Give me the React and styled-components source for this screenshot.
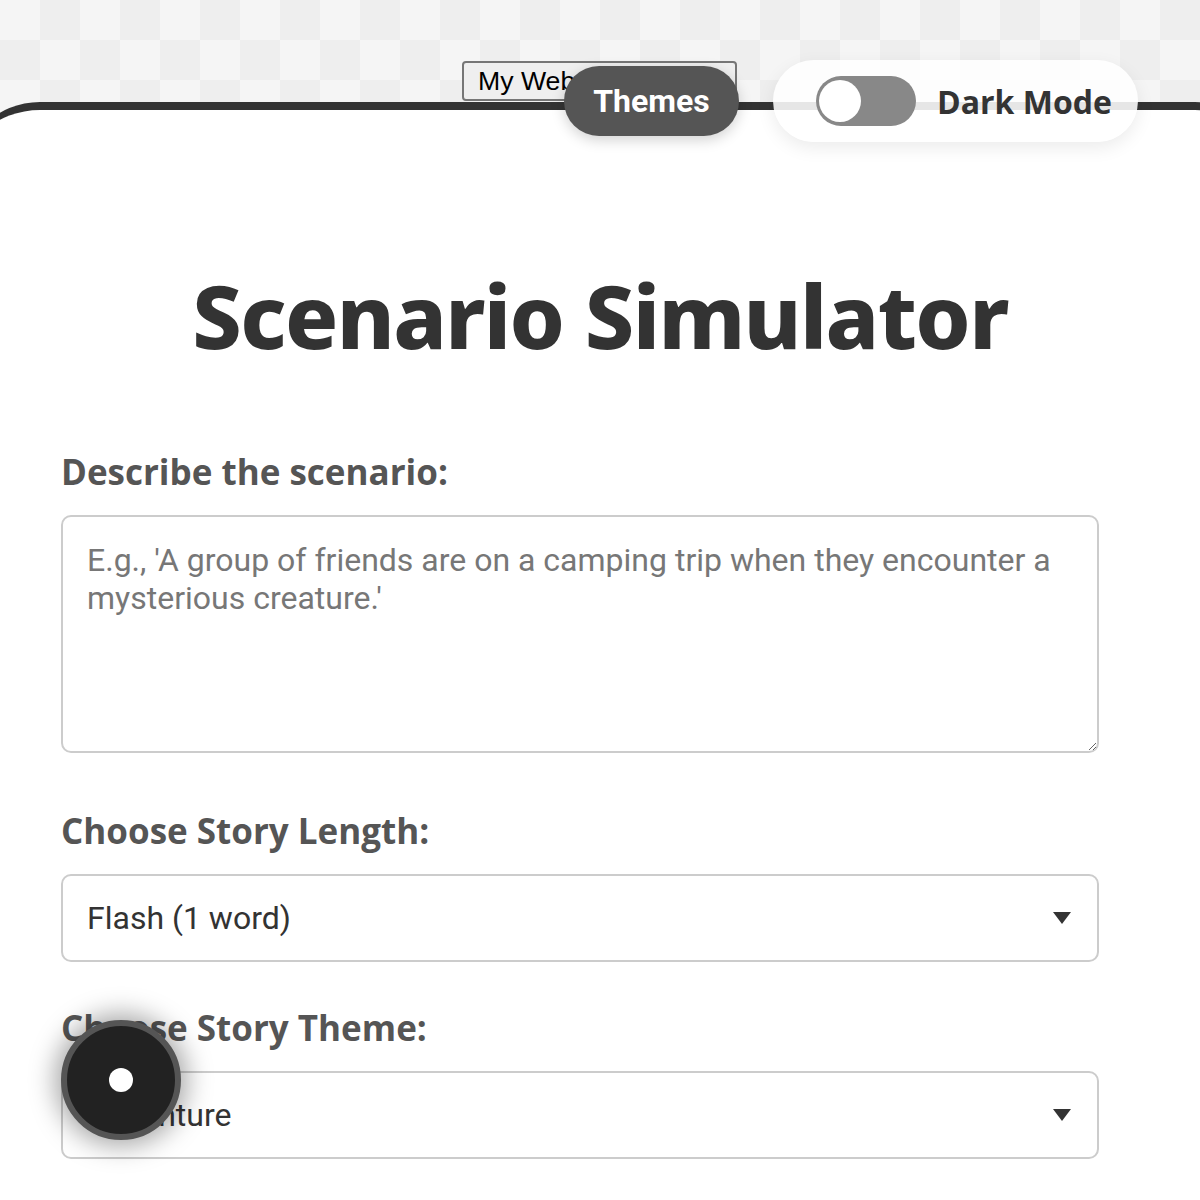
import { useState } from "react";
import styled, { createGlobalStyle } from "styled-components";

const GlobalStyle = createGlobalStyle`
  html, body {
    margin: 0;
    padding: 0;
  }
  body {
    overflow: hidden;
    font-family: "Open Sans", "Noto Sans", sans-serif;
    background-color: #f3f3f3;
    background-image: repeating-conic-gradient(#eeeeee 0 25%, #f5f5f5 0 50%);
    background-size: 80px 80px;
  }
`;

const Page = styled.div`
  height: 1200px;
  overflow: hidden;
`;

// 상단 헤더 (버튼 + 테마 + 다크모드)
const Header = styled.header`
  position: relative;
  z-index: 2;
  display: flex;
  align-items: center;
  justify-content: flex-end;
  height: 82px;
  margin-top: 60px;
  padding-right: 62px;
`;

const SiteButton = styled.button`
  align-self: flex-start;
  margin-top: 1px;
  width: 275px;
  height: 40px;
  padding: 0 14px;
  text-align: left;
  font-family: "Liberation Sans", Arial, sans-serif;
  font-size: 26.67px;
  color: #000;
  background: #efefef;
  border: 2px solid #767676;
  border-radius: 4px;
  white-space: nowrap;
  overflow: hidden;
`;

const ThemesPill = styled.button`
  margin-left: -173px;
  width: 175px;
  height: 70px;
  border: none;
  border-radius: 35px;
  background: #555;
  color: #fff;
  font-family: Roboto, sans-serif;
  font-weight: 700;
  font-size: 32px;
  box-shadow: 0 4px 14px rgba(0, 0, 0, 0.18);
  cursor: pointer;
`;

const ModePill = styled.div`
  display: flex;
  align-items: center;
  gap: 21px;
  width: 365px;
  margin-left: 34px;
  height: 82px;
  padding: 0 0 0 43px;
  box-sizing: border-box;
  border-radius: 41px;
  background: rgba(255, 255, 255, 0.88);
  box-shadow: 0 6px 18px rgba(0, 0, 0, 0.08);
`;

const Track = styled.button`
  position: relative;
  flex-shrink: 0;
  width: 100px;
  height: 50px;
  padding: 0;
  border: none;
  border-radius: 25px;
  background: ${(p) => (p.$on ? "#333" : "#888")};
  cursor: pointer;
`;

const Knob = styled.span`
  position: absolute;
  top: 4px;
  left: ${(p) => (p.$on ? "54px" : "3px")};
  width: 42px;
  height: 42px;
  border-radius: 50%;
  background: #fff;
  transition: left 0.2s;
`;

const ModeText = styled.span`
  font-family: "Open Sans", sans-serif;
  font-weight: 700;
  font-size: 32px;
  color: #333;
  white-space: nowrap;
`;

const Card = styled.main`
  position: relative;
  z-index: 1;
  margin: -40px -75px 0 -40px;
  padding: 0 135px 40px 100px;
  background: #fff;
  border-top: 8px solid #333;
  border-radius: 80px 80px 0 0;
`;

const Title = styled.h1`
  margin: 153px 0 80px;
  text-align: center;
  font-family: "Noto Sans", sans-serif;
  font-weight: 800;
  font-size: 88px;
  line-height: 105px;
  letter-spacing: -1.6px;
  color: #333;
`;

const Form = styled.form`
  width: 1038px;
  margin-left: 1px;
`;

const Group = styled.div`
  margin-bottom: 42px;
`;

const Label = styled.label`
  display: block;
  margin-bottom: 20px;
  font-family: "Open Sans", sans-serif;
  font-weight: 700;
  font-size: 35px;
  color: #555;
`;

const TextArea = styled.textarea`
  display: block;
  width: 100%;
  height: 238px;
  margin-bottom: 54px;
  padding: 24px;
  box-sizing: border-box;
  font-family: Roboto, sans-serif;
  font-size: 32px;
  line-height: 38px;
  color: #333;
  border: 2px solid #ccc;
  border-radius: 10px;
  outline: none;
  resize: vertical;

  &::placeholder {
    color: #777;
  }
`;

const SelectWrap = styled.div`
  position: relative;

  &::after {
    content: "";
    position: absolute;
    right: 28px;
    top: 38px;
    border-left: 9px solid transparent;
    border-right: 9px solid transparent;
    border-top: 12px solid #333;
    pointer-events: none;
  }
`;

const Select = styled.select`
  display: block;
  width: 100%;
  height: 88px;
  padding: 0 24px;
  box-sizing: border-box;
  appearance: none;
  font-family: Roboto, sans-serif;
  font-size: 32px;
  color: #333;
  background: #fff;
  border: 2px solid #ccc;
  border-radius: 10px;
  outline: none;
`;

const Fab = styled.button`
  position: fixed;
  left: 61px;
  bottom: 60px;
  z-index: 5;
  display: flex;
  align-items: center;
  justify-content: center;
  width: 120px;
  height: 120px;
  padding: 0;
  border: 6px solid #555;
  border-radius: 50%;
  background: #222;
  box-shadow: 0 0 26px 6px rgba(0, 0, 0, 0.35);
  cursor: pointer;
`;

const Dot = styled.span`
  width: 24px;
  height: 24px;
  border-radius: 50%;
  background: #fff;
`;

const App = () => {
  const [dark, setDark] = useState(false);
  const [scenario, setScenario] = useState("");

  return (
    <Page>
      <GlobalStyle />
      <Header>
        <SiteButton>My Website Builder</SiteButton>
        <ThemesPill>Themes</ThemesPill>
        <ModePill>
          <Track $on={dark} onClick={() => setDark(!dark)}>
            <Knob $on={dark} />
          </Track>
          <ModeText>Dark Mode</ModeText>
        </ModePill>
      </Header>

      <Card>
        <Title>Scenario Simulator</Title>
        <Form onSubmit={(e) => e.preventDefault()}>
          <Group>
            <Label htmlFor="scenario">Describe the scenario:</Label>
            <TextArea
              id="scenario"
              value={scenario}
              onChange={(e) => setScenario(e.target.value)}
              placeholder="E.g., 'A group of friends are on a camping trip when they encounter a mysterious creature.'"
            />
          </Group>
          <Group>
            <Label htmlFor="length">Choose Story Length:</Label>
            <SelectWrap>
              <Select id="length" defaultValue="flash">
                <option value="flash">Flash (1 word)</option>
                <option value="short">Short (1 paragraph)</option>
                <option value="medium">Medium (3 paragraphs)</option>
              </Select>
            </SelectWrap>
          </Group>
          <Group>
            <Label htmlFor="theme">Choose Story Theme:</Label>
            <SelectWrap>
              <Select id="theme" defaultValue="adventure">
                <option value="adventure">Adventure</option>
                <option value="mystery">Mystery</option>
                <option value="horror">Horror</option>
              </Select>
            </SelectWrap>
          </Group>
        </Form>
      </Card>

      <Fab aria-label="menu">
        <Dot />
      </Fab>
    </Page>
  );
};

export default App;
